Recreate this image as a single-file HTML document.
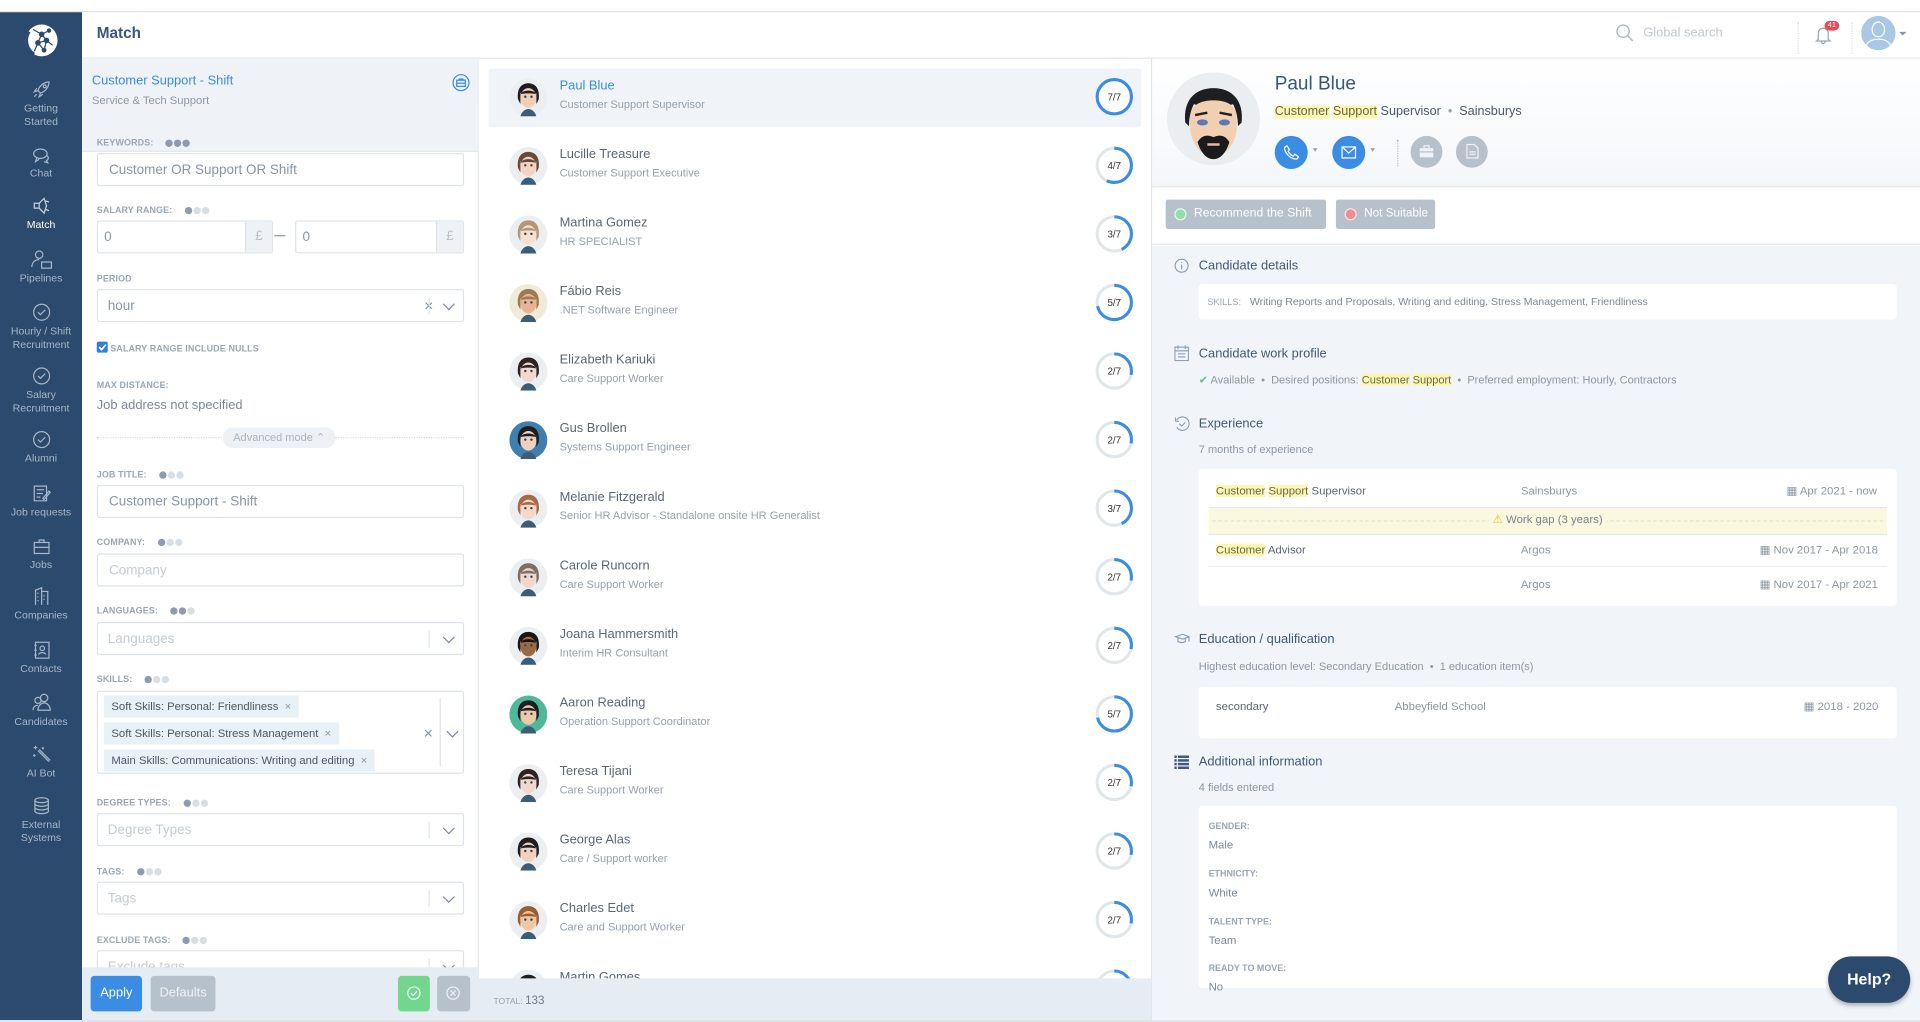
<!DOCTYPE html>
<html><head><meta charset="utf-8">
<style>
*{box-sizing:border-box;margin:0;padding:0}
html,body{width:1920px;height:1022px;overflow:hidden;background:#fff;font-family:"Liberation Sans",sans-serif}
#w{position:absolute;left:0;top:0;width:1568px;height:835px;transform:scale(1.22449);transform-origin:0 0;overflow:hidden;background:#fff}
.a{position:absolute}
.nav{position:absolute;left:0;width:67px;text-align:center;color:#a7b6c9;font-size:8.6px;line-height:10.5px}
.nav svg{display:block;margin:0 auto 2px}
.lbl{position:absolute;left:79px;font-size:7.3px;color:#9aa6b6;letter-spacing:.1px;font-weight:bold}
.dots{display:inline-block;margin-left:8px;vertical-align:-1px}
.dots i{display:inline-block;width:6px;height:6px;border-radius:50%;background:#d7dee6;margin-right:1px}
.dots i.on{background:#8c9bb0}
.inp{position:absolute;left:79px;width:300px;height:27px;border:1px solid #dfe4ea;border-radius:2px;background:#fff;font-size:11px;color:#8a95a3;padding:7px 9px}
.ph{color:#c5ccd4}
.sel:after{content:"";position:absolute;right:27px;top:6px;height:14px;border-left:1px solid #dfe4ea}
.chev{position:absolute;right:8px;top:8px;width:7px;height:7px;border-right:1.5px solid #7d8c9f;border-bottom:1.5px solid #7d8c9f;transform:rotate(45deg)}
.item{position:absolute;left:399px;width:533px;height:48px}
.item .nm{position:absolute;left:58px;top:8px;font-size:10.5px;color:#5b6675}
.item .sb{position:absolute;left:58px;top:24px;font-size:9px;color:#97a1ad}
.item .av{position:absolute;left:17px;top:8px}
.item .rg{position:absolute;left:495px;top:7px}
.sec{position:absolute;left:979px;font-size:10.5px;color:#3d5a7e}
.ico{position:absolute;left:959px}
.box{position:absolute;left:979px;width:570px;background:#fff;border-radius:3px}
.g{color:#8d97a3}
.hl{background:#fbf7b3;color:#6b6a40}
</style></head><body><div id="w">

<div class="a" style="left:0;top:0;width:1568px;height:10px;background:#fff;border-bottom:1px solid #dde2e7"></div>

<div class="a" style="left:0;top:10px;width:67px;height:825px;background:#2c4a6d"></div>
<svg class="a" style="left:19px;top:18px" width="30" height="30" viewBox="0 0 30 30"><circle cx="15" cy="15" r="13" fill="#fff"/><g stroke="#2c4a6d" stroke-width="1" fill="#2c4a6d"><path d="M8 6 L15 10 L21 7 M15 10 L12 17 L19 15 L15 10 M12 17 L9 24 M12 17 L17 23 L19 15 L24 19" fill="none"/><circle cx="15" cy="10" r="1.8"/><circle cx="12" cy="17" r="1.8"/><circle cx="19" cy="15" r="1.8"/><circle cx="17" cy="23" r="1.5"/><circle cx="21" cy="7" r="1.3"/></g><path d="M5 8 A13 13 0 0 0 9 26" stroke="#2c4a6d" stroke-width="2" fill="none"/></svg>

<div class="nav" style="top:65px"><svg width="16" height="16" viewBox="0 0 16 16" fill="none" stroke="#a7b6c9" stroke-width="1"><path d="M14 2C10 2 6 5 5 9l2 2c4-1 7-5 7-9zM5 9l-3 1 2-3M7 11l-1 3 3-2M4 12l-2 2"/><circle cx="10.5" cy="5.5" r="1.2"/></svg>Getting<br>Started</div>
<div class="nav" style="top:120px"><svg width="16" height="14" viewBox="0 0 16 14" fill="none" stroke="#a7b6c9" stroke-width="1"><ellipse cx="7" cy="5.5" rx="5.5" ry="3.8"/><path d="M4 9l-1 3 3-2M12 7c2 1 2 3 0 4l1 2-3-1"/></svg>Chat</div>
<div class="nav" style="top:160px;color:#fff"><svg width="16" height="16" viewBox="0 0 16 16" fill="none" stroke="#c6d1de" stroke-width="1"><path d="M2 6h4l4-4 2 6-2 6-4-4H2zM6 6v4M11 4l3 1M11 11l3 1"/></svg>Match</div>
<div class="nav" style="top:204px"><svg width="18" height="16" viewBox="0 0 18 16" fill="none" stroke="#a7b6c9" stroke-width="1"><circle cx="7" cy="4" r="3"/><path d="M1 14c0-4 3-6 6-6M9 10h8v5H9z"/></svg>Pipelines</div>
<div class="nav" style="top:247px"><svg width="16" height="16" viewBox="0 0 16 16" fill="none" stroke="#a7b6c9" stroke-width="1"><circle cx="8" cy="8" r="6.5"/><path d="M5 8l2 2 4-4"/></svg>Hourly / Shift<br>Recruitment</div>
<div class="nav" style="top:299px"><svg width="16" height="16" viewBox="0 0 16 16" fill="none" stroke="#a7b6c9" stroke-width="1"><circle cx="8" cy="8" r="6.5"/><path d="M5 8l2 2 4-4"/></svg>Salary<br>Recruitment</div>
<div class="nav" style="top:351px"><svg width="16" height="16" viewBox="0 0 16 16" fill="none" stroke="#a7b6c9" stroke-width="1"><circle cx="8" cy="8" r="6.5"/><path d="M5 8l2 2 4-4"/></svg>Alumni</div>
<div class="nav" style="top:395px"><svg width="16" height="16" viewBox="0 0 16 16" fill="none" stroke="#a7b6c9" stroke-width="1"><path d="M2 2h10v12H2zM4 5h6M4 8h5M4 11h3M9 12l5-6 1 1-5 6z"/></svg>Job requests</div>
<div class="nav" style="top:438px"><svg width="16" height="16" viewBox="0 0 16 16" fill="none" stroke="#a7b6c9" stroke-width="1"><rect x="2" y="5" width="12" height="9"/><path d="M6 5V3h4v2M2 9h12"/></svg>Jobs</div>
<div class="nav" style="top:479px"><svg width="16" height="16" viewBox="0 0 16 16" fill="none" stroke="#a7b6c9" stroke-width="1"><path d="M3 15V3l5-2v14M8 4h5v11M5 5v1M5 8v1M5 11v1M10 7v1M10 10v1"/></svg>Companies</div>
<div class="nav" style="top:523px"><svg width="16" height="16" viewBox="0 0 16 16" fill="none" stroke="#a7b6c9" stroke-width="1"><rect x="3" y="1.5" width="11" height="13"/><circle cx="8.5" cy="6.5" r="1.8"/><path d="M5.5 11.5c1-2 5-2 6 0M2 4h2M2 8h2M2 12h2"/></svg>Contacts</div>
<div class="nav" style="top:566px"><svg width="18" height="16" viewBox="0 0 18 16" fill="none" stroke="#a7b6c9" stroke-width="1"><circle cx="6" cy="6" r="2.5"/><circle cx="11" cy="4" r="3"/><path d="M2 14c0-3 2-4 4-4M6 14c0-4 3-6 5-6s5 2 5 6z"/></svg>Candidates</div>
<div class="nav" style="top:608px"><svg width="16" height="16" viewBox="0 0 16 16" fill="none" stroke="#a7b6c9" stroke-width="1"><path d="M5 5l9 9M6 4l9 9M3 1v3M1.5 2.5h3M9 2v2M8 3h2M2 8v2M1 9h2"/></svg>AI Bot</div>
<div class="nav" style="top:650px"><svg width="16" height="16" viewBox="0 0 16 16" fill="none" stroke="#a7b6c9" stroke-width="1"><ellipse cx="8" cy="3.5" rx="5.5" ry="2"/><path d="M2.5 3.5v9c0 1 2.5 2 5.5 2s5.5-1 5.5-2v-9M2.5 6.5c0 1 2.5 2 5.5 2s5.5-1 5.5-2M2.5 9.5c0 1 2.5 2 5.5 2s5.5-1 5.5-2"/></svg>External<br>Systems</div>

<div class="a" style="left:67px;top:10px;width:1501px;height:38px;background:#fff;border-bottom:1px solid #e1e6eb"></div>
<div class="a" style="left:79px;top:20px;font-size:12.5px;font-weight:bold;color:#36577e">Match</div>
<svg class="a" style="left:1319px;top:19px" width="16" height="16" viewBox="0 0 16 16" fill="none" stroke="#aab5c2" stroke-width="1.1"><circle cx="6.5" cy="6.5" r="5"/><path d="M10 10l4.5 4.5"/></svg>
<div class="a" style="left:1342px;top:21px;font-size:10.5px;color:#c1c8d0">Global search</div>
<div class="a" style="left:1468px;top:18px;height:26px;border-left:1px dotted #dde2e7"></div>
<svg class="a" style="left:1481px;top:20px" width="16" height="16" viewBox="0 0 16 16" fill="none" stroke="#9aa6b4" stroke-width="1"><path d="M4 12V7a4 4 0 0 1 8 0v5l1.5 1.5h-11zM6.5 14a1.5 1.5 0 0 0 3 0"/></svg>
<div class="a" style="left:1490px;top:17px;width:12px;height:8px;border-radius:4px;background:#e84b5c;color:#fff;font-size:6px;text-align:center;line-height:8px">41</div>
<div class="a" style="left:1512px;top:18px;height:26px;border-left:1px dotted #dde2e7"></div>
<svg class="a" style="left:1520px;top:13px" width="28" height="28" viewBox="0 0 28 28"><circle cx="14" cy="14" r="14" fill="#a8c8e6"/><path d="M9 11a5 6 0 0 1 10 0c0 4-2 6-5 6s-5-2-5-6zM4 24c2-4 6-5 10-5s8 1 10 5" fill="none" stroke="#fff" stroke-width="1"/></svg>
<div class="a" style="left:1551px;top:26px;border:3px solid transparent;border-top:3px solid #8a97a6"></div>

<div class="a" style="left:67px;top:48px;width:324px;height:787px;background:#fff;border-right:1px solid #e1e6eb"></div>
<div class="a" style="left:67px;top:48px;width:324px;height:76px;background:#eff3f7;border-bottom:1px solid #e1e6eb"></div>
<div class="a" style="left:75px;top:60px;font-size:10.5px;color:#3a8de3">Customer Support - Shift</div>
<div class="a" style="left:75px;top:77px;font-size:9.2px;color:#8d97a3">Service &amp; Tech Support</div>
<svg class="a" style="left:369px;top:60px" width="15" height="15" viewBox="0 0 15 15" fill="none" stroke="#3a8de3" stroke-width="1"><circle cx="7.5" cy="7.5" r="6.5"/><rect x="4" y="5.5" width="7" height="5"/><path d="M6 5.5v-1h3v1M4 8h7"/></svg>

<div class="lbl" style="top:112px">KEYWORDS: <span class="dots"><i class="on"></i><i class="on"></i><i class="on"></i></span></div>
<div class="inp" style="top:125px">Customer OR Support OR Shift</div>
<div class="lbl" style="top:167px">SALARY RANGE: <span class="dots"><i class="on"></i><i></i><i></i></span></div>
<div class="inp" style="top:180px;width:144px;padding-left:5px">0<span class="a" style="right:0;top:0;width:22px;height:25px;background:#eef2f6;border-left:1px solid #dfe4ea;text-align:center;line-height:25px;color:#b8c1cb">£</span></div>
<div class="a" style="left:224px;top:192px;width:9px;border-top:1px solid #8c98a6"></div>
<div class="inp" style="left:241px;top:180px;width:138px;padding-left:5px">0<span class="a" style="right:0;top:0;width:22px;height:25px;background:#eef2f6;border-left:1px solid #dfe4ea;text-align:center;line-height:25px;color:#b8c1cb">£</span></div>
<div class="lbl" style="top:223px">PERIOD</div>
<div class="inp sel" style="top:236px;padding-left:8px">hour<span class="a" style="right:24px;top:5px;font-size:13px;color:#7d8c9f">×</span><span class="chev"></span></div>
<div class="a" style="left:79px;top:279px;width:9px;height:9px;background:#2f7fe0;border-radius:1.5px"></div>
<svg class="a" style="left:79px;top:279px" width="9" height="9" viewBox="0 0 9 9"><path d="M2 4.5l2 2 3.5-4" stroke="#fff" stroke-width="1.4" fill="none"/></svg>
<div class="lbl" style="left:90px;top:280px">SALARY RANGE INCLUDE NULLS</div>
<div class="lbl" style="top:310px">MAX DISTANCE:</div>
<div class="a" style="left:79px;top:325px;font-size:10.5px;color:#7d8896">Job address not specified</div>
<div class="a" style="left:79px;top:357px;width:300px;border-top:1px dotted #d5dce3"></div>
<div class="a" style="left:182px;top:349px;width:92px;height:17px;border-radius:9px;background:#edf1f5;font-size:9px;color:#aab4c0;text-align:center;line-height:17px">Advanced mode ⌃</div>
<div class="lbl" style="top:383px">JOB TITLE: <span class="dots"><i class="on"></i><i></i><i></i></span></div>
<div class="inp" style="top:396px">Customer Support - Shift</div>
<div class="lbl" style="top:438px">COMPANY: <span class="dots"><i class="on"></i><i></i><i></i></span></div>
<div class="inp ph" style="top:452px">Company</div>
<div class="lbl" style="top:494px">LANGUAGES: <span class="dots"><i class="on"></i><i class="on"></i><i></i></span></div>
<div class="inp sel ph" style="top:508px;padding-left:8px">Languages<span class="chev"></span></div>
<div class="lbl" style="top:550px">SKILLS: <span class="dots"><i class="on"></i><i></i><i></i></span></div>
<div class="inp" style="top:564px;height:68px"></div>
<div class="a" style="left:359px;top:570px;height:56px;border-left:1px solid #dfe4ea"></div>
<div class="a" style="left:346px;top:591px;font-size:13px;color:#7d8c9f">×</div>
<div class="a" style="left:366px;top:594px;width:7px;height:7px;border-right:1.5px solid #7d8c9f;border-bottom:1.5px solid #7d8c9f;transform:rotate(45deg)"></div>
<div class="a" style="left:85px;top:568px;height:18px;padding:0 6px;background:#e8f0f8;font-size:9.2px;color:#4d5866;line-height:18px">Soft Skills: Personal: Friendliness &nbsp;<span style="color:#8a96a4">×</span></div>
<div class="a" style="left:85px;top:590px;height:18px;padding:0 6px;background:#e8f0f8;font-size:9.2px;color:#4d5866;line-height:18px">Soft Skills: Personal: Stress Management &nbsp;<span style="color:#8a96a4">×</span></div>
<div class="a" style="left:85px;top:612px;height:18px;padding:0 6px;background:#e8f0f8;font-size:9.2px;color:#4d5866;line-height:18px">Main Skills: Communications: Writing and editing &nbsp;<span style="color:#8a96a4">×</span></div>
<div class="lbl" style="top:651px">DEGREE TYPES: <span class="dots"><i class="on"></i><i></i><i></i></span></div>
<div class="inp sel ph" style="top:664px;padding-left:8px">Degree Types<span class="chev"></span></div>
<div class="lbl" style="top:707px">TAGS: <span class="dots"><i class="on"></i><i></i><i></i></span></div>
<div class="inp sel ph" style="top:720px;padding-left:8px">Tags<span class="chev"></span></div>
<div class="lbl" style="top:763px">EXCLUDE TAGS: <span class="dots"><i class="on"></i><i></i><i></i></span></div>
<div class="inp sel ph" style="top:776px;padding-left:8px">Exclude tags<span class="chev"></span></div>
<div class="a" style="left:67px;top:790px;width:324px;height:45px;background:#e5ecf3"></div>
<div class="a" style="left:74px;top:797px;width:42px;height:29px;background:#3a8de3;border-radius:3px;color:#fff;font-size:10.5px;text-align:center;line-height:29px">Apply</div>
<div class="a" style="left:123px;top:797px;width:53px;height:29px;background:#b7c1cc;border-radius:3px;color:#eef2f6;font-size:10.5px;text-align:center;line-height:29px">Defaults</div>
<div class="a" style="left:325px;top:797px;width:26px;height:29px;background:#72d68f;border-radius:3px"></div>
<svg class="a" style="left:332px;top:805px" width="12" height="12" viewBox="0 0 12 12" fill="none" stroke="#eaf9ef" stroke-width="1"><circle cx="6" cy="6" r="5"/><path d="M3.5 6l2 2 3-3.5"/></svg>
<div class="a" style="left:357px;top:797px;width:27px;height:29px;background:#b7c1cc;border-radius:3px"></div>
<svg class="a" style="left:364px;top:805px" width="12" height="12" viewBox="0 0 12 12" fill="none" stroke="#eef2f6" stroke-width="1"><circle cx="6" cy="6" r="5"/><path d="M4 4l4 4M8 4l-4 4"/></svg>

<div class="a" style="left:399px;top:56px;width:533px;height:48px;background:#f0f4f8;border-radius:2px"></div>
<div id="list"></div>
<div class="a" style="left:940px;top:48px;height:787px;border-left:1px solid #e1e6eb"></div>
<div class="a" style="left:391px;top:799px;width:549px;height:36px;background:#e5ecf3"></div>
<div class="a" style="left:403px;top:812px;font-size:7px;color:#98a3b0">TOTAL: <span style="font-size:9.5px;color:#6f7b89">133</span></div>

<div class="a" style="left:941px;top:48px;width:627px;height:105px;background:linear-gradient(#fff,#f4f7fa);border-bottom:1px solid #e1e6eb"></div>
<svg class="a" style="left:952px;top:58px" width="78" height="78" viewBox="0 0 78 78"><circle cx="39" cy="39" r="38" fill="#ebeef1"/><path d="M16 42c-2-18 8-28 23-28s25 10 23 28l-3 3c0-8-2-14-4-18-8 3-24 3-32 0-2 4-4 10-4 18z" fill="#1e1e22"/><path d="M20 38c0-10 8-14 19-14s19 4 19 14v8c0 12-9 24-19 24S20 58 20 46z" fill="#f2cfb0"/><ellipse cx="30" cy="42" rx="4.5" ry="2.5" fill="#5b79b8"/><ellipse cx="48" cy="42" rx="4.5" ry="2.5" fill="#5b79b8"/><path d="M24 36l10-2M44 34l10 2" stroke="#222" stroke-width="2"/><path d="M26 58c4-6 8-6 13-4 5-2 9-2 13 4-3 10-8 14-13 14s-10-4-13-14z" fill="#1b1b1d"/><path d="M34 60h10" stroke="#e3b9a0" stroke-width="2"/></svg>
<div class="a" style="left:1041px;top:60px;font-size:15.5px;color:#36577e">Paul Blue</div>
<div class="a" style="left:1041px;top:86px;font-size:10.3px;color:#4e5967"><span class="hl">Customer</span> <span class="hl">Support</span> Supervisor &nbsp;<span style="color:#9aa4b0">•</span>&nbsp; Sainsburys</div>
<div class="a" style="left:1041px;top:111px;width:27px;height:27px;border-radius:50%;background:#3a8de3"></div>
<svg class="a" style="left:1048px;top:118px" width="13" height="13" viewBox="0 0 13 13" fill="none" stroke="#fff" stroke-width="1"><path d="M3 1l2 3-1 1.5c1 2 2 3 4 4L9.5 8l3 2-1.5 2C6 12 1 7 1 2.5z"/></svg>
<div class="a" style="left:1072px;top:121px;border:2.5px solid transparent;border-top:3px solid #9aa6b4"></div>
<div class="a" style="left:1088px;top:111px;width:27px;height:27px;border-radius:50%;background:#3a8de3"></div>
<svg class="a" style="left:1095px;top:119px" width="13" height="11" viewBox="0 0 13 11" fill="none" stroke="#fff" stroke-width="1"><rect x="1" y="1" width="11" height="9"/><path d="M1 1l5.5 5L12 1"/></svg>
<div class="a" style="left:1119px;top:121px;border:2.5px solid transparent;border-top:3px solid #9aa6b4"></div>
<div class="a" style="left:1141px;top:114px;height:22px;border-left:1px dotted #b8c1cc"></div>
<div class="a" style="left:1152px;top:111px;width:26px;height:26px;border-radius:50%;background:#b7c1cc"></div>
<svg class="a" style="left:1159px;top:118px" width="12" height="11" viewBox="0 0 12 11"><rect x="0.5" y="3" width="11" height="7.5" fill="#eef2f6"/><path d="M4 3V1h4v2" stroke="#eef2f6" fill="none"/><path d="M0.5 6h11" stroke="#b7c1cc"/></svg>
<div class="a" style="left:1189px;top:111px;width:26px;height:26px;border-radius:50%;background:#b7c1cc"></div>
<svg class="a" style="left:1197px;top:117px" width="11" height="13" viewBox="0 0 11 13" fill="none" stroke="#eef2f6" stroke-width="1"><path d="M1 1h6l3 3v8H1z"/><path d="M3 7h5M3 9h5"/></svg>

<div class="a" style="left:941px;top:153px;width:627px;height:47px;background:#fff;border-bottom:1px solid #e1e6eb"></div>
<div class="a" style="left:952px;top:163px;width:131px;height:24px;background:#b7c1cc;border-radius:2px;color:#fff;font-size:10px;line-height:24px;padding-left:23px;white-space:nowrap">Recommend the Shift</div>
<div class="a" style="left:959px;top:170px;width:10px;height:10px;border-radius:50%;background:#8fe0a6;border:1px solid #e8f8ee"></div>
<div class="a" style="left:1091px;top:163px;height:24px;background:#b7c1cc;border-radius:2px;color:#fff;font-size:9.6px;line-height:24px;padding:0 6px 0 23px;white-space:nowrap">Not Suitable</div>
<div class="a" style="left:1098px;top:170px;width:10px;height:10px;border-radius:50%;background:#ef8d96;border:1px solid #fbe4e6"></div>

<div class="a" style="left:941px;top:201px;width:627px;height:634px;background:#f1f4f8"></div>
<svg class="ico" style="left:959px;top:211px" width="12" height="12" viewBox="0 0 12 12" fill="none" stroke="#8a9bb3" stroke-width="0.9"><circle cx="6" cy="6" r="5.3"/><path d="M6 5v4M6 3v.8"/></svg>
<div class="sec" style="top:211px">Candidate details</div>
<div class="box" style="top:232px;height:29px;padding:9px 7px;font-size:8.6px;color:#7d8896"><span style="font-size:7.5px;color:#9aa6b6">SKILLS:</span> &nbsp; Writing Reports and Proposals, Writing and editing, Stress Management, Friendliness</div>
<svg class="ico" style="left:959px;top:282px" width="12" height="13" viewBox="0 0 12 13" fill="none" stroke="#8a9bb3" stroke-width="0.9"><rect x="0.5" y="1.5" width="11" height="11"/><path d="M0.5 4.5h11M3 0v3M9 0v3M3 7h6M3 9.5h6"/></svg>
<div class="sec" style="top:283px">Candidate work profile</div>
<div class="a" style="left:979px;top:305px;font-size:9px;color:#8d97a3"><span style="color:#5fc37a">✔</span> Available &nbsp;•&nbsp; Desired positions: <span class="hl">Customer</span> <span class="hl">Support</span> &nbsp;•&nbsp; Preferred employment: Hourly, Contractors</div>
<svg class="ico" style="left:959px;top:339px" width="13" height="14" viewBox="0 0 13 14" fill="none" stroke="#8a9bb3" stroke-width="0.9"><path d="M2 4a5.5 5.5 0 1 1 0 6M1 2v3h3M4 7l2 2 3-3"/></svg>
<div class="sec" style="top:340px">Experience</div>
<div class="a" style="left:979px;top:362px;font-size:9px;color:#8d97a3">7 months of experience</div>
<div class="box" style="top:383px;height:112px"></div>
<div class="a" style="left:993px;top:396px;font-size:9.3px;color:#5b6675"><span class="hl">Customer</span> <span class="hl">Support</span> Supervisor</div>
<div class="a" style="left:1242px;top:396px;font-size:9.3px;color:#8d97a3">Sainsburys</div>
<div class="a" style="left:1459px;top:396px;font-size:9.3px;color:#8d97a3">▦ Apr 2021 - now</div>
<div class="a" style="left:987px;top:414px;width:554px;height:23px;background:#faf8de;border-top:1px solid #e4e9ef;border-bottom:1px solid #e4e9ef"></div>
<div class="a" style="left:990px;top:425px;width:548px;border-top:1px dashed #e2e3d8"></div>
<div class="a" style="left:1216px;top:419px;padding:0 3px;background:#faf8de;font-size:9.3px;color:#7c8491"><span style="color:#f0b429">⚠</span> Work gap (3 years)</div>
<div class="a" style="left:993px;top:444px;font-size:9.3px;color:#5b6675"><span class="hl">Customer</span> Advisor</div>
<div class="a" style="left:1242px;top:444px;font-size:9.3px;color:#8d97a3">Argos</div>
<div class="a" style="left:1437px;top:444px;font-size:9.3px;color:#8d97a3">▦ Nov 2017 - Apr 2018</div>
<div class="a" style="left:987px;top:462px;width:554px;border-top:1px solid #eef1f4"></div>
<div class="a" style="left:1242px;top:472px;font-size:9.3px;color:#8d97a3">Argos</div>
<div class="a" style="left:1437px;top:472px;font-size:9.3px;color:#8d97a3">▦ Nov 2017 - Apr 2021</div>
<svg class="ico" style="left:959px;top:517px" width="13" height="11" viewBox="0 0 13 11" fill="none" stroke="#8a9bb3" stroke-width="0.9"><path d="M1 3l6-2 5 2-5 2zM3 4v3c2 1 4 1 6 0V4M12 3v4"/></svg>
<div class="sec" style="top:516px">Education / qualification</div>
<div class="a" style="left:979px;top:539px;font-size:9px;color:#8d97a3">Highest education level: Secondary Education &nbsp;•&nbsp; 1 education item(s)</div>
<div class="box" style="top:561px;height:42px"></div>
<div class="a" style="left:993px;top:572px;font-size:9.3px;color:#5b6675">secondary</div>
<div class="a" style="left:1139px;top:572px;font-size:9.3px;color:#8d97a3">Abbeyfield School</div>
<div class="a" style="left:1473px;top:572px;font-size:9.3px;color:#8d97a3">▦ 2018 - 2020</div>
<svg class="ico" style="left:959px;top:617px" width="12" height="11" viewBox="0 0 12 11" fill="#3d5a7e"><rect x="0" y="0" width="2" height="2"/><rect x="3" y="0" width="9" height="2"/><rect x="0" y="3" width="2" height="2"/><rect x="3" y="3" width="9" height="2"/><rect x="0" y="6" width="2" height="2"/><rect x="3" y="6" width="9" height="2"/><rect x="0" y="9" width="2" height="2"/><rect x="3" y="9" width="9" height="2"/></svg>
<div class="sec" style="top:616px">Additional information</div>
<div class="a" style="left:979px;top:638px;font-size:9px;color:#8d97a3">4 fields entered</div>
<div class="box" style="top:658px;height:149px"></div>
<div class="a" style="left:987px;top:670px;font-size:7.3px;color:#9aa6b6;font-weight:bold">GENDER:</div>
<div class="a" style="left:987px;top:685px;font-size:9.3px;color:#7d8896">Male</div>
<div class="a" style="left:987px;top:709px;font-size:7.3px;color:#9aa6b6;font-weight:bold">ETHNICITY:</div>
<div class="a" style="left:987px;top:724px;font-size:9.3px;color:#7d8896">White</div>
<div class="a" style="left:987px;top:748px;font-size:7.3px;color:#9aa6b6;font-weight:bold">TALENT TYPE:</div>
<div class="a" style="left:987px;top:763px;font-size:9.3px;color:#7d8896">Team</div>
<div class="a" style="left:987px;top:786px;font-size:7.3px;color:#9aa6b6;font-weight:bold">READY TO MOVE:</div>
<div class="a" style="left:987px;top:801px;font-size:9.3px;color:#7d8896">No</div>
<div class="a" style="left:1493px;top:781px;width:67px;height:38px;border-radius:19px;background:#2c4a6d;color:#fff;font-weight:bold;font-size:13px;text-align:center;line-height:38px;box-shadow:0 2px 4px rgba(0,0,0,.3)">Help?</div>
<div class="a" style="left:0;top:833px;width:1568px;height:2px;background:#e1e6eb"></div>
</div>
<script>
var d=[["Paul Blue","Customer Support Supervisor",7,"#1e1e22","#f2cfb0","#eceff2"],
["Lucille Treasure","Customer Support Executive",4,"#6b4a36","#f4d3c0","#eceff2"],
["Martina Gomez","HR SPECIALIST",3,"#b39776","#f7dfd2","#eceff2"],
["Fábio Reis",".NET Software Engineer",5,"#9c7a55","#eab494","#f0ead8"],
["Elizabeth Kariuki","Care Support Worker",2,"#2a2224","#f3d6cc","#eceff2"],
["Gus Brollen","Systems Support Engineer",2,"#1e1e22","#f1d1bb","#3f7fb0"],
["Melanie Fitzgerald","Senior HR Advisor - Standalone onsite HR Generalist",3,"#a86a44","#f6d8c8","#eceff2"],
["Carole Runcorn","Care Support Worker",2,"#7d6e66","#f2d6cd","#eceff2"],
["Joana Hammersmith","Interim HR Consultant",2,"#1a1414","#9b6a44","#eceff2"],
["Aaron Reading","Operation Support Coordinator",5,"#1e1e22","#eec9a8","#4fb89a"],
["Teresa Tijani","Care Support Worker",2,"#2a2224","#f3d6cc","#eceff2"],
["George Alas","Care / Support worker",2,"#1e1e22","#f1d1bb","#eceff2"],
["Charles Edet","Care and Support Worker",2,"#9b5e2e","#f0c7a3","#eceff2"],
["Martin Gomes","",5,"#1e1e22","#eec9a8","#eceff2"]];
var h="";
d.forEach(function(r,i){var t=56+i*56;var c=87.96,f=c*r[2]/7;
h+='<div class="item" style="top:'+t+'px"><svg class="av" width="31" height="31" viewBox="0 0 31 31"><circle cx="15.5" cy="15.5" r="15.5" fill="'+r[5]+'"/><path d="M7 17c-1-9 3-13 8.5-13S25 8 24 17l-2 4V12H9v9z" fill="'+r[3]+'"/><ellipse cx="15.5" cy="16" rx="6.5" ry="8" fill="'+r[4]+'"/><path d="M9 13c2-4 11-4 13 0-3-1-10-1-13 0z" fill="'+r[3]+'"/><circle cx="13" cy="15" r="1" fill="#345"/><circle cx="18" cy="15" r="1" fill="#345"/><path d="M9 31c1-4 4-6 6.5-6s5.5 2 6.5 6z" fill="#3b5d78"/></svg>'
+'<div class="nm" style="'+(i==0?'color:#3a8de3':'')+'">'+r[0]+'</div><div class="sb">'+r[1]+'</div>'
+'<svg class="rg" width="32" height="32" viewBox="0 0 32 32"><circle cx="16" cy="16" r="14" fill="#fff" stroke="#e1e6ea" stroke-width="2.5"/><circle cx="16" cy="16" r="14" fill="none" stroke="#3a8de3" stroke-width="2.5" stroke-dasharray="'+f.toFixed(1)+' 100" transform="rotate(-90 16 16)"/><text x="16" y="19" text-anchor="middle" font-family="Liberation Sans,sans-serif" font-size="8" fill="#333">'+r[2]+'/7</text></svg></div>';});
document.getElementById("list").innerHTML=h;
</script>
</body></html>
